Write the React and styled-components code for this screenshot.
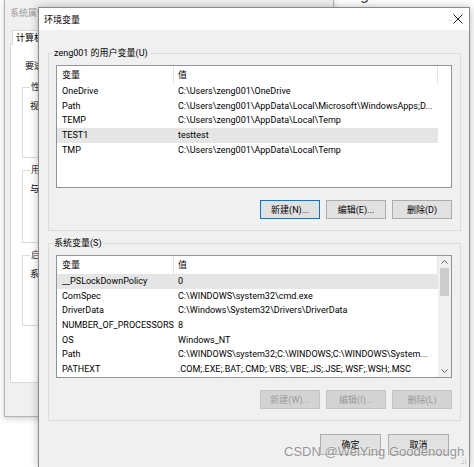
import React from 'react';
import styled, { createGlobalStyle } from 'styled-components';

const GlobalStyle = createGlobalStyle`
  html, body {
    margin: 0;
    padding: 0;
    background: #fff;
  }
  body {
    font-family: Roboto, "Noto Sans CJK SC", sans-serif;
    font-size: 9px;
    color: #000;
  }
  * {
    box-sizing: border-box;
  }
`;

const Desktop = styled.div`
  position: relative;
  width: 474px;
  height: 467px;
  overflow: hidden;
  background: #fff;
`;

const TopGlyph = styled.span`
  position: absolute;
  left: 360px;
  top: -15px;
  font-size: 16px;
  color: #444;
`;

/* ---------- background window: 系统属性 ---------- */

const BgWindow = styled.div`
  position: absolute;
  z-index: 0;
  left: 4px;
  top: -2px;
  width: 330px;
  height: 419px;
  background: #f0f0f0;
  border: 1px solid #b4b4b4;
  box-shadow: 0 2px 6px rgba(0, 0, 0, 0.18);
  display: flex;
  flex-direction: column;
`;

const BgTitle = styled.div`
  height: 26px;
  padding-left: 5px;
  display: flex;
  align-items: center;
  color: #9a9a9a;
`;

const BgBody = styled.div`
  padding: 5px 6px 0 5px;
  display: flex;
  flex-direction: column;
`;

const TabRow = styled.div`
  display: flex;
  padding-left: 2px;
  margin-bottom: -1px;
`;

const Tab = styled.div`
  height: 15px;
  padding: 0 3px;
  line-height: 14px;
  background: #fff;
  border: 1px solid #d9d9d9;
  border-bottom: none;
  position: relative;
  z-index: 1;
`;

const TabPanel = styled.div`
  height: 339px;
  background: #fff;
  border: 1px solid #d9d9d9;
  padding: 15px 0 0 11px;
  display: flex;
  flex-direction: column;
  gap: 6px;
`;

const Notice = styled.div`
  line-height: 12px;
  margin: 0 0 3px 3px;
  white-space: nowrap;
`;

const BgGroup = styled.fieldset`
  margin: 0;
  min-width: 0;
  width: 300px;
  height: ${(p) => p.$h}px;
  border: 1px solid #dcdcdc;
  padding: 7px 0 0 7px;
`;

const BgLegend = styled.legend`
  padding: 0 1px;
  line-height: 12px;
  color: #333;
`;

const BgText = styled.div`
  line-height: 12px;
  white-space: nowrap;
`;

/* ---------- front dialog: 环境变量 ---------- */

const Dialog = styled.div`
  position: absolute;
  z-index: 1;
  left: 38px;
  top: 7px;
  width: 432px;
  height: 461px;
  background: #f0f0f0;
  border: 1px solid #8a8a8a;
  box-shadow: 0 0 8px rgba(0, 0, 0, 0.28);
  display: flex;
  flex-direction: column;
`;

const TitleBar = styled.div`
  height: 22px;
  flex: none;
  background: #fff;
  display: flex;
  align-items: center;
  justify-content: space-between;
  padding: 0 6px 0 5px;
`;

const DialogBody = styled.div`
  padding: 17px 8px 0 9px;
  display: flex;
  flex-direction: column;
`;

const GroupBox = styled.fieldset`
  margin: ${(p) => p.$top || 0}px 0 0 0;
  min-width: 0;
  border: 1px solid #dcdcdc;
  padding: 6px 8px 11px 7px;
`;

const GroupLegend = styled.legend`
  padding: 0 2px;
  margin-left: -4px;
  line-height: 12px;
`;

const ListBox = styled.div`
  height: 123px;
  background: #fff;
  border: 1px solid #8f949b;
  display: flex;
`;

const Table = styled.div`
  flex: 1;
  display: flex;
  flex-direction: column;
`;

const HeaderRow = styled.div`
  display: grid;
  grid-template-columns: 117px 264px;
  height: 18px;
`;

const HeaderCell = styled.div`
  line-height: 18px;
  padding-left: ${(p) => (p.$second ? 4 : 5)}px;
  border-right: 1px solid #e5e5e5;
`;

const Row = styled.div`
  display: grid;
  grid-template-columns: 117px 264px;
  height: 14.67px;
  line-height: 14.67px;
  background: ${(p) => (p.$selected ? '#e5e5e5' : 'transparent')};
`;

const Cell = styled.div`
  padding-left: ${(p) => (p.$second ? 4 : 5)}px;
  white-space: nowrap;
  overflow: hidden;
`;

const ScrollBar = styled.div`
  width: 13px;
  background: ${(p) => (p.$blank ? '#fff' : '#f0f0f0')};
  display: flex;
  flex-direction: column;
  align-items: center;
`;

const ScrollArrow = styled.div`
  height: 12px;
  display: flex;
  align-items: center;
  justify-content: center;
`;

const ScrollThumb = styled.div`
  width: 9px;
  height: 28px;
  background: #cdcdcd;
`;

const ScrollTrack = styled.div`
  flex: 1;
`;

const ButtonRow = styled.div`
  display: flex;
  justify-content: flex-end;
  gap: 6px;
  margin-top: 12px;
`;

const Button = styled.button`
  width: ${(p) => p.$w || 60}px;
  height: ${(p) => p.$h || 19}px;
  padding: 0;
  font: inherit;
  font-size: 9px;
  color: #000;
  background: #e1e1e1;
  border: 1px solid ${(p) => (p.$primary ? '#0078d7' : '#adadad')};
  &:disabled {
    color: #9a9a9a;
    background: #d3d3d3;
    border-color: #c4c4c4;
  }
`;

const Footer = styled.div`
  display: flex;
  justify-content: flex-end;
  gap: 7px;
  margin-top: 13px;
  padding-right: 12px;
`;

const Grip = styled.svg`
  position: absolute;
  right: 2px;
  bottom: 2px;
`;

const Watermark = styled.div`
  position: absolute;
  z-index: 2;
  left: 284px;
  top: 444px;
  font-family: "Liberation Sans", Arial, sans-serif;
  font-size: 13px;
  line-height: 16px;
  color: rgba(130, 130, 130, 0.85);
  text-shadow: 0 0 2px rgba(255, 255, 255, 0.9);
  white-space: nowrap;
`;

const userVars = [
  ['OneDrive', 'C:\\Users\\zeng001\\OneDrive'],
  ['Path', 'C:\\Users\\zeng001\\AppData\\Local\\Microsoft\\WindowsApps;D...'],
  ['TEMP', 'C:\\Users\\zeng001\\AppData\\Local\\Temp'],
  ['TEST1', 'testtest', true],
  ['TMP', 'C:\\Users\\zeng001\\AppData\\Local\\Temp'],
];

const systemVars = [
  ['__PSLockDownPolicy', '0', true],
  ['ComSpec', 'C:\\WINDOWS\\system32\\cmd.exe'],
  ['DriverData', 'C:\\Windows\\System32\\Drivers\\DriverData'],
  ['NUMBER_OF_PROCESSORS', '8'],
  ['OS', 'Windows_NT'],
  ['Path', 'C:\\WINDOWS\\system32;C:\\WINDOWS;C:\\WINDOWS\\System...'],
  ['PATHEXT', '.COM;.EXE;.BAT;.CMD;.VBS;.VBE;.JS;.JSE;.WSF;.WSH;.MSC'],
];

const Chevron = ({ up }) => (
  <svg width="7" height="4" viewBox="0 0 7 4">
    <path
      d={up ? 'M0.5 3.5 L3.5 0.5 L6.5 3.5' : 'M0.5 0.5 L3.5 3.5 L6.5 0.5'}
      fill="none"
      stroke="#606060"
      strokeWidth="1"
    />
  </svg>
);

const VarList = ({ rows, scroll }) => (
  <ListBox>
    <Table>
      <HeaderRow>
        <HeaderCell>变量</HeaderCell>
        <HeaderCell $second>值</HeaderCell>
      </HeaderRow>
      {rows.map(([name, value, selected]) => (
        <Row key={name + value} $selected={selected}>
          <Cell>{name}</Cell>
          <Cell $second>{value}</Cell>
        </Row>
      ))}
    </Table>
    {scroll ? (
      <ScrollBar>
        <ScrollArrow><Chevron up /></ScrollArrow>
        <ScrollThumb />
        <ScrollTrack />
        <ScrollArrow><Chevron /></ScrollArrow>
      </ScrollBar>
    ) : (
      <ScrollBar $blank />
    )}
  </ListBox>
);

const App = () => (
  <>
    <GlobalStyle />
    <Desktop>
      <TopGlyph>g</TopGlyph>

      <BgWindow>
        <BgTitle>系统属性</BgTitle>
        <BgBody>
          <TabRow>
            <Tab>计算机名</Tab>
          </TabRow>
          <TabPanel>
            <Notice>要进行大多数更改，你必须作为管理员登录。</Notice>
            <BgGroup $h={77}>
              <BgLegend>性能</BgLegend>
              <BgText>视觉效果，处理器计划，内存使用，以及虚拟内存</BgText>
            </BgGroup>
            <BgGroup $h={79}>
              <BgLegend>用户配置文件</BgLegend>
              <BgText>与登录帐户相关的桌面设置</BgText>
            </BgGroup>
            <BgGroup $h={77}>
              <BgLegend>启动和故障恢复</BgLegend>
              <BgText>系统启动、系统故障和调试信息</BgText>
            </BgGroup>
          </TabPanel>
        </BgBody>
      </BgWindow>

      <Dialog>
        <TitleBar>
          <span>环境变量</span>
          <svg width="10" height="10" viewBox="0 0 10 10">
            <path d="M0.5 0.5 L9.5 9.5 M9.5 0.5 L0.5 9.5" stroke="#222" strokeWidth="1" />
          </svg>
        </TitleBar>
        <DialogBody>
          <GroupBox>
            <GroupLegend>zeng001 的用户变量(U)</GroupLegend>
            <VarList rows={userVars} />
            <ButtonRow>
              <Button $primary>新建(N)...</Button>
              <Button>编辑(E)...</Button>
              <Button>删除(D)</Button>
            </ButtonRow>
          </GroupBox>
          <GroupBox $top={6}>
            <GroupLegend>系统变量(S)</GroupLegend>
            <VarList rows={systemVars} scroll />
            <ButtonRow>
              <Button disabled>新建(W)...</Button>
              <Button disabled>编辑(I)...</Button>
              <Button disabled>删除(L)</Button>
            </ButtonRow>
          </GroupBox>
          <Footer>
            <Button $w={61} $h={21}>确定</Button>
            <Button $w={61} $h={21}>取消</Button>
          </Footer>
        </DialogBody>
        <Grip width="7" height="7" viewBox="0 0 7 7">
          <g fill="#b0b0b0">
            <rect x="5" y="1" width="1" height="1" />
            <rect x="3" y="3" width="1" height="1" />
            <rect x="5" y="3" width="1" height="1" />
            <rect x="1" y="5" width="1" height="1" />
            <rect x="3" y="5" width="1" height="1" />
            <rect x="5" y="5" width="1" height="1" />
          </g>
        </Grip>
      </Dialog>

      <Watermark>CSDN @WeiYing Goodenough</Watermark>
    </Desktop>
  </>
);

export default App;
